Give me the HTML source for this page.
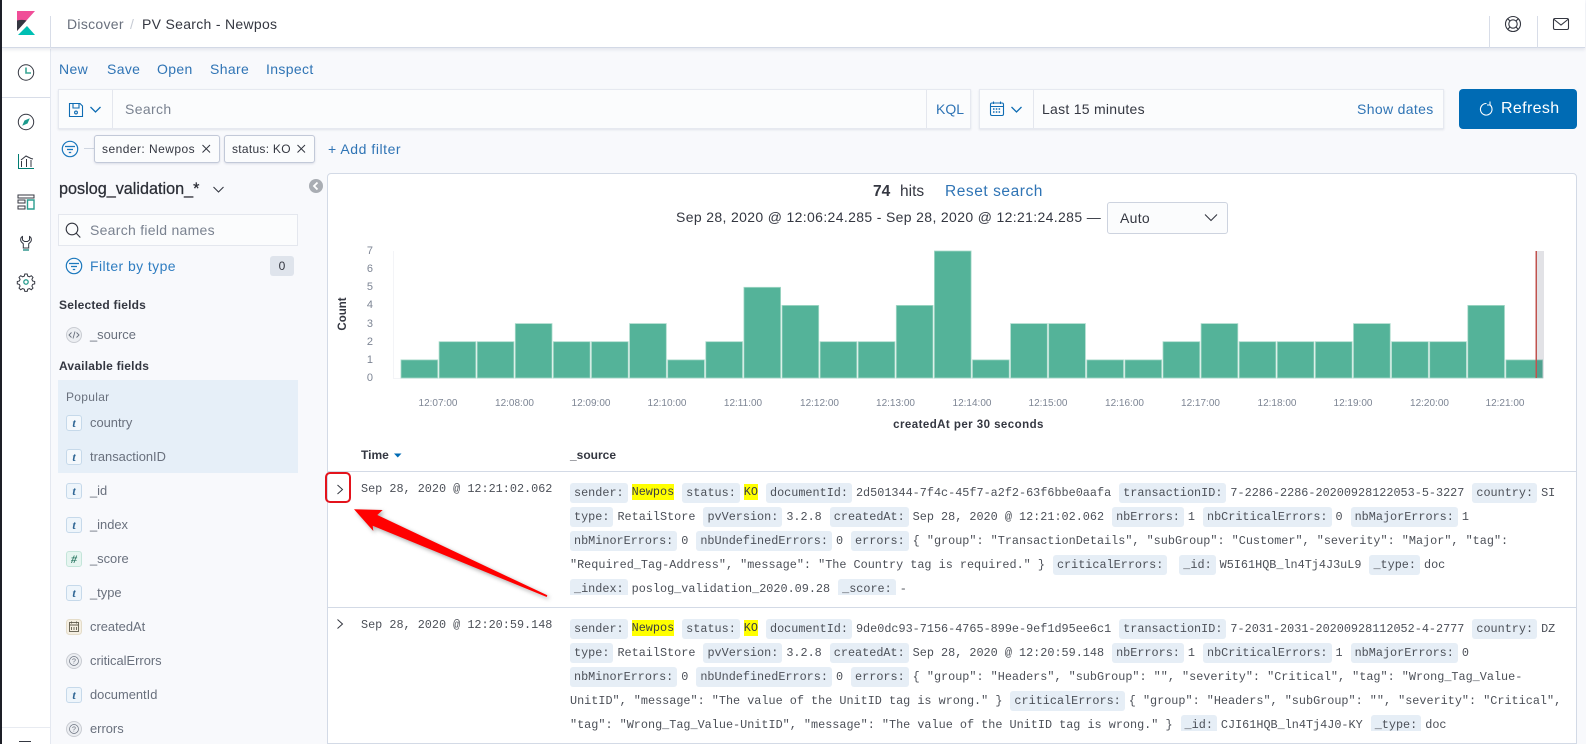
<!DOCTYPE html>
<html><head><meta charset="utf-8"><title>Discover</title>
<style>
html,body{margin:0;padding:0;width:1586px;height:744px;overflow:hidden;background:#f8f9fc}
body{position:relative;font-family:"Liberation Sans",sans-serif;color:#343741;-webkit-font-smoothing:antialiased}
.a{position:absolute;white-space:nowrap;line-height:20px;height:20px}
.box{position:absolute;box-sizing:border-box}
.lk{color:#2f74b5;font-size:14px;letter-spacing:.35px}
svg{position:absolute;overflow:visible}
.fld{position:absolute;left:90px;font-size:12.9px;color:#69707d;line-height:20px;white-space:nowrap}
.ic{position:absolute;left:66px;width:16px;height:16px;box-sizing:border-box;border:1px solid #c6d9ea;border-radius:3px;background:#eef5fb;color:#2e6594;font:italic bold 12px/14px "Liberation Serif",serif;text-align:center}
.src{position:absolute;left:570px;width:1000px;height:112px;overflow:hidden;font:11.82px/20px "Liberation Mono",monospace;color:#4c5058}
.src div{position:absolute;left:0;height:20px;white-space:pre}
.src b{font-weight:normal;background:#e6eef6;padding:0 4px;margin-right:4px;border-radius:3px;display:inline-block;height:20px;color:#4c5058}
.src i{font-style:normal;margin-right:8px}
.src mark{background:#ffff00;color:#3a3d44;display:inline-block;height:16px;line-height:17px;vertical-align:top;margin-top:1px;font-style:normal}
</style></head><body>

<!-- left strip, nav -->
<div class="box" style="left:2px;top:0;width:48px;height:744px;background:#fff"></div>
<div class="box" style="left:0;top:0;width:2px;height:744px;background:#1d1f27"></div>
<div class="box" style="left:50px;top:49px;width:1px;height:695px;background:#e4e8f0"></div>
<div class="box" style="left:2px;top:97px;width:48px;height:1px;background:#d8dde8"></div>
<div class="box" style="left:2px;top:727px;width:48px;height:1px;background:#e8ebf1"></div>
<div class="box" style="left:19px;top:741px;width:12px;height:1px;background:#343741"></div>

<!-- header -->
<div class="box" style="left:2px;top:0;width:1583px;height:48px;background:#fff;border-bottom:1px solid #d3d9e6;box-shadow:0 2px 3px rgba(60,70,110,.10)"></div>
<div class="box" style="left:50px;top:16px;width:1px;height:32px;background:#d8dde8"></div>
<div class="box" style="left:1489px;top:16px;width:1px;height:32px;background:#d8dde8"></div>
<div class="box" style="left:1537px;top:16px;width:1px;height:32px;background:#d8dde8"></div>

<svg style="left:0;top:0" width="60" height="300" viewBox="0 0 60 300">
  <path d="M17 11H35L17 31Z" fill="#f04e98"/>
  <path d="M17 20.500V31L26.500 20.500C23.500 19.600 20 19.600 17 20.500Z" fill="#343741"/>
  <path d="M18 35H35L27 26Z" fill="#00bfb3"/>
  <g fill="none" stroke="#343741" stroke-width="1">
    <circle cx="26" cy="72.500" r="7.700"/>
    <circle cx="26" cy="122" r="7.700"/>
    <path d="M18.500 154v14.500H34" stroke="#017d73"/>
    <path d="M21 160l5-4 5 2.500 2 .5M21.500 161v6M26.500 159v8M31 160v7"/>
    <path d="M18 195h16v3H18zM18 200h7v3h-7zM18 206h7v3h-7z"/>
    <path d="M27.500 200H34V209H27.500Z" stroke="#2a9d8f" stroke-width="1.400"/>
    <path d="M22.500 236.500c-2 1-2.500 3.800-1 5.500l1.800 1.700v4.300h5.400v-4.300l1.800-1.700c1.500-1.700 1-4.500-1-5.500v3.500l-2 1.500h-3l-2-1.500z"/>
    <path d="M23 250h6" stroke="#017d73" stroke-width="1.200"/>
    <path d="M24.800 275h2.400l.5 2.100 1.700.7 1.900-1.100 1.700 1.700-1.100 1.900.7 1.700 2.100.5v2.400l-2.100.5-.7 1.700 1.100 1.900-1.700 1.700-1.900-1.100-1.700.7-.5 2.100h-2.400l-.5-2.100-1.700-.7-1.900 1.100-1.700-1.700 1.100-1.900-.7-1.700-2.100-.5v-2.400l2.100-.5.7-1.700-1.100-1.900 1.700-1.700 1.900 1.100 1.700-.7z" transform="translate(0,-1)"/>
    <circle cx="26" cy="282" r="2.200" stroke="#2a9d8f" stroke-width="1.300"/>
  </g>
  <path d="M26 67.500V73H31" fill="none" stroke="#3aa594" stroke-width="1.600"/>
  <path d="M29.800 118.200L27.500 123.500 22.200 125.800 24.500 120.500Z" fill="#1a9a8c"/>
</svg>

<span class="a" style="left:67px;top:14px;font-size:14px;color:#69707d;letter-spacing:.3px">Discover</span>
<span class="a" style="left:130px;top:14px;font-size:14px;color:#c6cbd4">/</span>
<span class="a" style="left:142px;top:14px;font-size:14px;color:#343741;letter-spacing:.3px">PV Search - Newpos</span>

<svg style="left:1500px;top:12px" width="80" height="24" viewBox="1500 12 80 24" fill="none" stroke="#343741" stroke-width="1.100">
  <circle cx="1513" cy="24" r="7.500"/><circle cx="1513" cy="24" r="4.200"/>
  <path d="M1507.700 18.700l2.400 2.400M1518.300 18.700l-2.400 2.400M1507.700 29.300l2.400-2.400M1518.300 29.300l-2.400-2.400"/>
  <rect x="1553.500" y="18.500" width="15" height="11" rx="1.500"/><path d="M1553.500 19l7.500 6 7.500-6"/>
</svg>

<!-- top nav links -->
<span class="a lk" style="left:59px;top:59px">New</span>
<span class="a lk" style="left:107px;top:59px">Save</span>
<span class="a lk" style="left:157px;top:59px">Open</span>
<span class="a lk" style="left:210px;top:59px">Share</span>
<span class="a lk" style="left:266px;top:59px">Inspect</span>

<!-- query bar -->
<div class="box" style="left:58px;top:89px;width:913px;height:40px;background:#fbfcfd;border:1px solid #e6e9f0;box-shadow:0 1px 2px rgba(60,70,110,.12)"></div>
<div class="box" style="left:112px;top:90px;width:1px;height:38px;background:#e4e7ee"></div>
<div class="box" style="left:926px;top:90px;width:1px;height:38px;background:#e4e7ee"></div>
<svg style="left:60px;top:95px" width="50" height="28" viewBox="60 95 50 28" fill="none" stroke="#0f6cb3" stroke-width="1.100">
  <path d="M69.500 103.500h10.500l2.500 2.500v10.500h-13z"/><path d="M73 103.500v4.500h6v-4.500"/><circle cx="76" cy="112.500" r="1.400"/>
  <path d="M90.500 107l5 5 5-5" stroke-width="1.300"/>
</svg>
<span class="a" style="left:125px;top:99px;font-size:14px;color:#7a8290;letter-spacing:.35px">Search</span>
<span class="a" style="left:936px;top:99px;font-size:14px;color:#2f74b5">KQL</span>

<div class="box" style="left:979px;top:89px;width:465px;height:40px;background:#fbfcfd;border:1px solid #e6e9f0;box-shadow:0 1px 2px rgba(60,70,110,.12)"></div>
<div class="box" style="left:1033px;top:90px;width:1px;height:38px;background:#e4e7ee"></div>
<svg style="left:985px;top:95px" width="45" height="28" viewBox="985 95 45 28" fill="none" stroke="#0f6cb3" stroke-width="1.100">
  <rect x="990.500" y="103" width="13" height="12.500" rx="1.500"/><path d="M990.500 106.500h13M993.500 101.500v2.500M1000.500 101.500v2.500"/>
  <path d="M993 109h8M993 112h8" stroke-dasharray="1.500 1.300" stroke-width="1.500"/>
  <path d="M1011.500 107l5 5 5-5" stroke-width="1.300"/>
</svg>
<span class="a" style="left:1042px;top:99px;font-size:14px;color:#343741;letter-spacing:.27px">Last 15 minutes</span>
<span class="a" style="left:1357px;top:99px;font-size:14px;color:#2f74b5;letter-spacing:.35px">Show dates</span>

<div class="box" style="left:1459px;top:89px;width:118px;height:40px;background:#006bb4;border-radius:4px"></div>
<svg style="left:1475px;top:100px" width="20" height="20" viewBox="1475 100 20 20" fill="none" stroke="#fff" stroke-width="1.100">
  <path d="M1489.500 104.500a5.800 5.800 0 1 1-3-1"/><path d="M1490 101.500v3.500h-3"/>
</svg>
<span class="a" style="left:1501px;top:99px;font-size:16px;color:#fff;letter-spacing:.35px">Refresh</span>

<!-- filter row -->
<svg style="left:60px;top:138px" width="40" height="24" viewBox="60 138 40 24" fill="none" stroke="#1b78bd" stroke-width="1.200">
  <circle cx="70" cy="149" r="7.700"/><path d="M65 146.500h10M67 149.500h6M68.800 152.500h2.400"/>
  <path d="M84 148.500h10" stroke="#cfd5e0" stroke-width="1"/>
</svg>
<div class="box" style="left:94px;top:135px;width:126px;height:28px;background:#fbfcfd;border:1px solid #c2c9d8;border-radius:3px;box-shadow:0 1px 2px rgba(60,70,110,.15)"></div>
<div class="box" style="left:224px;top:135px;width:91px;height:28px;background:#fbfcfd;border:1px solid #c2c9d8;border-radius:3px;box-shadow:0 1px 2px rgba(60,70,110,.15)"></div>
<span class="a" style="left:102px;top:139px;font-size:12px;color:#343741;letter-spacing:.45px">sender: Newpos</span>
<span class="a" style="left:232px;top:139px;font-size:12px;color:#343741;letter-spacing:.28px">status: KO</span>
<svg style="left:200px;top:144px" width="110" height="12" viewBox="200 144 110 12" fill="none" stroke="#343741" stroke-width="1">
  <path d="M202.500 145l7.500 7.500M210 145l-7.500 7.500M297.500 145l7.500 7.500M305 145l-7.500 7.500"/>
</svg>
<span class="a" style="left:328px;top:139px;font-size:14px;color:#2f74b5;letter-spacing:.55px">+ Add filter</span>

<!-- sidebar -->
<span class="a" style="left:59px;top:179px;font-size:16.200px;color:#2b2e36;-webkit-text-stroke:.25px #2b2e36">poslog_validation_*</span>
<svg style="left:210px;top:182px" width="18" height="14" viewBox="210 182 18 14" fill="none" stroke="#343741" stroke-width="1.100"><path d="M213.500 187l5 5 5-5"/></svg>
<svg style="left:308px;top:178px" width="16" height="16" viewBox="0 0 16 16"><circle cx="8" cy="8" r="7" fill="#a9adb3"/><path d="M9.500 4.500L6 8l3.500 3.500" fill="none" stroke="#fff" stroke-width="1.800"/></svg>

<div class="box" style="left:58px;top:214px;width:240px;height:32px;background:#fbfcfd;border:1px solid #e4e7ee"></div>
<svg style="left:62px;top:218px" width="24" height="24" viewBox="62 218 24 24" fill="none" stroke="#343741" stroke-width="1.100"><circle cx="72" cy="229" r="5.800"/><path d="M76.300 233.300l4 4.200"/></svg>
<span class="a" style="left:90px;top:220px;font-size:14px;color:#7a8290;letter-spacing:.28px">Search field names</span>
<svg style="left:64px;top:256px" width="20" height="20" viewBox="64 256 20 20" fill="none" stroke="#1b78bd" stroke-width="1.200">
  <circle cx="74" cy="266" r="7.700"/><path d="M69 263.500h10M71 266.500h6M72.800 269.500h2.400"/>
</svg>
<span class="a" style="left:90px;top:256px;font-size:14px;color:#2f7dc1;letter-spacing:.42px">Filter by type</span>
<div class="box" style="left:270px;top:256px;width:24px;height:20px;background:#dfe4ec;border-radius:3px;font-size:12px;line-height:20px;text-align:center;color:#343741">0</div>

<span class="a" style="left:59px;top:295px;font-size:12px;font-weight:bold;color:#343741;letter-spacing:.2px">Selected fields</span>
<span class="a" style="left:59px;top:356px;font-size:12px;font-weight:bold;color:#343741;letter-spacing:.2px">Available fields</span>
<div class="box" style="left:58px;top:380px;width:240px;height:93px;background:#e6eff8"></div>
<span class="a" style="left:66px;top:387px;font-size:12px;color:#69707d;letter-spacing:.3px">Popular</span>

<svg style="left:66px;top:327px" width="16" height="16" viewBox="0 0 16 16"><circle cx="8" cy="8" r="7.500" fill="#eceef2" stroke="#c9ccd2"/><path d="M5.500 5.500L3 8l2.500 2.500M10.500 5.500L13 8l-2.500 2.500M9 4.500L7 11.500" fill="none" stroke="#69707d" stroke-width=".9"/></svg>
<span class="fld" style="top:325px">_source</span>

<div class="ic" style="top:415px;background:#f4f8fc">t</div><span class="fld" style="top:413px">country</span>
<div class="ic" style="top:449px;background:#f4f8fc">t</div><span class="fld" style="top:447px">transactionID</span>
<div class="ic" style="top:483px">t</div><span class="fld" style="top:481px">_id</span>
<div class="ic" style="top:517px">t</div><span class="fld" style="top:515px">_index</span>
<div class="ic" style="top:551px;background:#e6f5f0;border-color:#c4e5da;color:#2f7a66">#</div><span class="fld" style="top:549px">_score</span>
<div class="ic" style="top:585px">t</div><span class="fld" style="top:583px">_type</span>
<svg style="left:66px;top:619px" width="16" height="16" viewBox="0 0 16 16"><rect x=".5" y=".5" width="15" height="15" rx="3" fill="#f5efe2" stroke="#e4dcc9"/><g fill="none" stroke="#5f5a4c" stroke-width=".9"><rect x="3.500" y="3.500" width="9" height="9"/><path d="M3.500 6h9M5.500 2.500v2M10.500 2.500v2M5.500 8v3M8 8v3M10.500 8v3"/></g></svg>
<span class="fld" style="top:617px">createdAt</span>
<svg style="left:66px;top:653px" width="16" height="16" viewBox="0 0 16 16"><circle cx="8" cy="8" r="7.500" fill="#eceef2" stroke="#c9ccd2"/><circle cx="8" cy="8" r="4.500" fill="none" stroke="#69707d" stroke-width=".7"/><text x="8" y="10.500" font-size="7" text-anchor="middle" fill="#69707d" font-family="Liberation Sans">?</text></svg>
<span class="fld" style="top:651px">criticalErrors</span>
<div class="ic" style="top:687px">t</div><span class="fld" style="top:685px">documentId</span>
<svg style="left:66px;top:721px" width="16" height="16" viewBox="0 0 16 16"><circle cx="8" cy="8" r="7.500" fill="#eceef2" stroke="#c9ccd2"/><circle cx="8" cy="8" r="4.500" fill="none" stroke="#69707d" stroke-width=".7"/><text x="8" y="10.500" font-size="7" text-anchor="middle" fill="#69707d" font-family="Liberation Sans">?</text></svg>
<span class="fld" style="top:719px">errors</span>

<!-- main panel -->
<div class="box" style="left:327px;top:173px;width:1250px;height:600px;background:#fff;border:1px solid #d3dae6;border-radius:4px"></div>

<span class="a" style="left:873px;top:179px;font-size:15.500px;font-weight:bold;color:#343741;line-height:21px;margin-top:2px">74</span>
<span class="a" style="left:900px;top:179px;font-size:15.500px;color:#343741;line-height:21px;margin-top:2px">hits</span>
<span class="a" style="left:945px;top:179px;font-size:15.500px;color:#2f74b5;letter-spacing:.55px;line-height:21px;margin-top:2px">Reset search</span>
<span class="a" style="left:676px;top:207px;font-size:14px;color:#343741;letter-spacing:.35px">Sep 28, 2020 @ 12:06:24.285 - Sep 28, 2020 @ 12:21:24.285 —</span>
<div class="box" style="left:1107px;top:202px;width:121px;height:32px;background:#fbfcfd;border:1px solid #cdd3df;border-radius:3px"></div>
<span class="a" style="left:1120px;top:208px;font-size:14px;color:#343741;letter-spacing:.3px">Auto</span>
<svg style="left:1200px;top:210px" width="20" height="16" viewBox="1200 210 20 16" fill="none" stroke="#343741" stroke-width="1.100"><path d="M1205 214.500l6 6 6-6"/></svg>

<!-- chart -->
<svg style="left:0;top:0" width="1586" height="744" viewBox="0 0 1586 744">
  <path d="M393.500 251V378.500H1544" fill="none" stroke="#f3f4f7"/>
  <g fill="#54b399" stroke="#a7d9c9" stroke-width=".8">
    <rect x="401" y="359.900" width="36.700" height="18.100"/>
    <rect x="439.100" y="341.700" width="36.700" height="36.300"/>
    <rect x="477.200" y="341.700" width="36.700" height="36.300"/>
    <rect x="515.300" y="323.600" width="36.700" height="54.400"/>
    <rect x="553.400" y="341.700" width="36.700" height="36.300"/>
    <rect x="591.500" y="341.700" width="36.700" height="36.300"/>
    <rect x="629.600" y="323.600" width="36.700" height="54.400"/>
    <rect x="667.700" y="359.900" width="36.700" height="18.100"/>
    <rect x="705.800" y="341.700" width="36.700" height="36.300"/>
    <rect x="743.900" y="287.300" width="36.700" height="90.700"/>
    <rect x="782" y="305.400" width="36.700" height="72.600"/>
    <rect x="820.100" y="341.700" width="36.700" height="36.300"/>
    <rect x="858.200" y="341.700" width="36.700" height="36.300"/>
    <rect x="896.300" y="305.400" width="36.700" height="72.600"/>
    <rect x="934.400" y="251" width="36.700" height="127"/>
    <rect x="972.500" y="359.900" width="36.700" height="18.100"/>
    <rect x="1010.600" y="323.600" width="36.700" height="54.400"/>
    <rect x="1048.700" y="323.600" width="36.700" height="54.400"/>
    <rect x="1086.800" y="359.900" width="36.700" height="18.100"/>
    <rect x="1124.900" y="359.900" width="36.700" height="18.100"/>
    <rect x="1163" y="341.700" width="36.700" height="36.300"/>
    <rect x="1201.100" y="323.600" width="36.700" height="54.400"/>
    <rect x="1239.200" y="341.700" width="36.700" height="36.300"/>
    <rect x="1277.300" y="341.700" width="36.700" height="36.300"/>
    <rect x="1315.400" y="341.700" width="36.700" height="36.300"/>
    <rect x="1353.500" y="323.600" width="36.700" height="54.400"/>
    <rect x="1391.600" y="341.700" width="36.700" height="36.300"/>
    <rect x="1429.700" y="341.700" width="36.700" height="36.300"/>
    <rect x="1467.800" y="305.400" width="36.700" height="72.600"/>
    <rect x="1505.900" y="359.900" width="36.700" height="18.100"/>
  </g>
  <rect x="1536" y="251" width="8" height="127" fill="#3a3a55" fill-opacity=".15"/>
  <rect x="1535.500" y="251" width="1.500" height="127" fill="#c0534f"/>
  <g font-family="Liberation Sans" font-size="11" fill="#7d8594" text-anchor="end">
    <text x="373" y="254">7</text><text x="373" y="272">6</text><text x="373" y="290">5</text><text x="373" y="308">4</text><text x="373" y="327">3</text><text x="373" y="345">2</text><text x="373" y="363">1</text><text x="373" y="381">0</text>
  </g>
  <g font-family="Liberation Sans" font-size="10" fill="#7d8594" text-anchor="middle">
    <text x="438" y="406">12:07:00</text><text x="514.500" y="406">12:08:00</text><text x="591" y="406">12:09:00</text><text x="667" y="406">12:10:00</text><text x="743" y="406">12:11:00</text><text x="819.500" y="406">12:12:00</text><text x="895.500" y="406">12:13:00</text><text x="972" y="406">12:14:00</text><text x="1048" y="406">12:15:00</text><text x="1124.500" y="406">12:16:00</text><text x="1200.500" y="406">12:17:00</text><text x="1277" y="406">12:18:00</text><text x="1353" y="406">12:19:00</text><text x="1429.500" y="406">12:20:00</text><text x="1505" y="406">12:21:00</text>
  </g>
  <text x="968.500" y="428" text-anchor="middle" font-family="Liberation Sans" font-size="11.500" font-weight="bold" fill="#343741" letter-spacing=".45">createdAt per 30 seconds</text>
  <text transform="translate(346,314) rotate(-90)" text-anchor="middle" font-family="Liberation Sans" font-size="11.500" font-weight="bold" fill="#343741">Count</text>
</svg>

<!-- table -->
<span class="a" style="left:361px;top:445px;font-size:12px;font-weight:bold;color:#343741">Time</span>
<svg style="left:393px;top:453px" width="10" height="6" viewBox="0 0 10 6"><path d="M1 .5H8.500L4.750 4.500Z" fill="#006bb4"/></svg>
<span class="a" style="left:570px;top:445px;font-size:12px;font-weight:bold;color:#343741">_source</span>

<div class="box" style="left:328px;top:471px;width:1248px;height:1px;background:#d3dae6"></div>
<div class="box" style="left:328px;top:607px;width:1248px;height:1px;background:#d3dae6"></div>
<div class="box" style="left:328px;top:743px;width:1248px;height:1px;background:#d3dae6"></div>

<span class="a" style="left:361px;top:479px;font:11.820px/20px 'Liberation Mono',monospace;color:#4c5058">Sep 28, 2020 @ 12:21:02.062</span>
<span class="a" style="left:361px;top:615px;font:11.820px/20px 'Liberation Mono',monospace;color:#4c5058">Sep 28, 2020 @ 12:20:59.148</span>
<svg style="left:330px;top:480px" width="20" height="150" viewBox="330 480 20 150" fill="none" stroke="#343741" stroke-width="1"><path d="M337.500 485l5 4.500-5 4.500M337.500 619.500l5 4.500-5 4.500"/></svg>

<div class="src" style="top:483px">
<div style="top:0"><b>sender:</b><i><mark>Newpos</mark></i><b>status:</b><i><mark>KO</mark></i><b>documentId:</b><i>2d501344-7f4c-45f7-a2f2-63f6bbe0aafa</i><b>transactionID:</b><i>7-2286-2286-20200928122053-5-3227</i><b>country:</b><i>SI</i></div>
<div style="top:24px"><b>type:</b><i>RetailStore</i><b>pvVersion:</b><i>3.2.8</i><b>createdAt:</b><i>Sep 28, 2020 @ 12:21:02.062</i><b>nbErrors:</b><i>1</i><b>nbCriticalErrors:</b><i>0</i><b>nbMajorErrors:</b><i>1</i></div>
<div style="top:48px"><b>nbMinorErrors:</b><i>0</i><b>nbUndefinedErrors:</b><i>0</i><b>errors:</b><i>{ "group": "TransactionDetails", "subGroup": "Customer", "severity": "Major", "tag":</i></div>
<div style="top:72px"><i>"Required_Tag-Address", "message": "The Country tag is required." }</i><b>criticalErrors:</b><i></i><b>_id:</b><i>W5I61HQB_ln4Tj4J3uL9</i><b>_type:</b><i>doc</i></div>
<div style="top:96px"><b>_index:</b><i>poslog_validation_2020.09.28</i><b>_score:</b><i>-</i></div>
</div>

<div class="src" style="top:619px">
<div style="top:0"><b>sender:</b><i><mark>Newpos</mark></i><b>status:</b><i><mark>KO</mark></i><b>documentId:</b><i>9de0dc93-7156-4765-899e-9ef1d95ee6c1</i><b>transactionID:</b><i>7-2031-2031-20200928112052-4-2777</i><b>country:</b><i>DZ</i></div>
<div style="top:24px"><b>type:</b><i>RetailStore</i><b>pvVersion:</b><i>3.2.8</i><b>createdAt:</b><i>Sep 28, 2020 @ 12:20:59.148</i><b>nbErrors:</b><i>1</i><b>nbCriticalErrors:</b><i>1</i><b>nbMajorErrors:</b><i>0</i></div>
<div style="top:48px"><b>nbMinorErrors:</b><i>0</i><b>nbUndefinedErrors:</b><i>0</i><b>errors:</b><i>{ "group": "Headers", "subGroup": "", "severity": "Critical", "tag": "Wrong_Tag_Value-</i></div>
<div style="top:72px"><i>UnitID", "message": "The value of the UnitID tag is wrong." }</i><b>criticalErrors:</b><i>{ "group": "Headers", "subGroup": "", "severity": "Critical",</i></div>
<div style="top:96px"><i>"tag": "Wrong_Tag_Value-UnitID", "message": "The value of the UnitID tag is wrong." }</i><b>_id:</b><i>CJI61HQB_ln4Tj4J0-KY</i><b>_type:</b><i>doc</i></div>
</div>

<!-- annotation -->
<div class="box" style="left:325px;top:472px;width:26px;height:31px;border:2px solid #e3131c;border-radius:5px"></div>
<svg style="left:340px;top:500px;filter:drop-shadow(2px 2px 2px rgba(0,0,0,.35))" width="220" height="105" viewBox="340 500 220 105">
  <path d="M354 509.300L382.700 510 377.300 515 547.300 595.300 546.700 597 372.700 525.700 373.300 531Z" fill="#ff0000"/>
</svg>
</body></html>
